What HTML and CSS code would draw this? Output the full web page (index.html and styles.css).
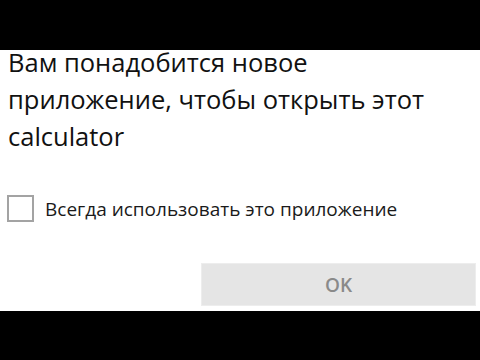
FILE: index.html
```html
<!DOCTYPE html>
<html lang="ru">
<head>
<meta charset="utf-8">
<link rel="stylesheet" href="styles.css">
</head>
<body>
<div class="page">
  <div class="bar"></div>
  <main class="dialog">
    <h1 class="title">Вам понадобится новое<br>приложение, чтобы открыть этот<br>calculator</h1>
    <label class="option">
      <span class="box"></span>
      <span class="option-text">Всегда использовать это приложение</span>
    </label>
    <div class="actions">
      <button class="ok" type="button" disabled>OK</button>
    </div>
  </main>
  <div class="bar bar-bottom"></div>
</div>
</body>
</html>
```

FILE: styles.css
```css
html, body {
  margin: 0;
  padding: 0;
  background: #000;
}
.page {
  width: 480px;
  height: 360px;
  display: flex;
  flex-direction: column;
  font-family: "Open Sans", "Noto Sans", sans-serif;
  color: #111;
}
.bar {
  height: 50px;
  background: #000;
  flex: none;
}
.bar-bottom {
  height: 49px;
}
.dialog {
  flex: 1;
  background: #fff;
  display: flex;
  flex-direction: column;
  padding: 0 4px 5px 8px;
}
.title {
  margin: -6px 0 0;
  font-size: 25.5px;
  font-weight: 400;
  line-height: 37px;
  white-space: nowrap;
}
.option {
  display: flex;
  align-items: center;
  gap: 11px;
  margin-top: 40px;
  margin-left: -1px;
}
.box {
  width: 23px;
  height: 23px;
  border: 2px solid #a3a3a3;
  background: #fff;
  flex: none;
}
.option-text {
  font-size: 19px;
  color: #1a1a1a;
}
.actions {
  margin-top: auto;
  display: flex;
  justify-content: flex-end;
}
.ok {
  width: 275px;
  height: 43px;
  background: #e5e5e5;
  border: 1px solid #ededed;
  color: #8a8a8a;
  font-family: "Open Sans", "Noto Sans", sans-serif;
  font-size: 19px;
  font-weight: 600;
  padding: 0;
}
```
